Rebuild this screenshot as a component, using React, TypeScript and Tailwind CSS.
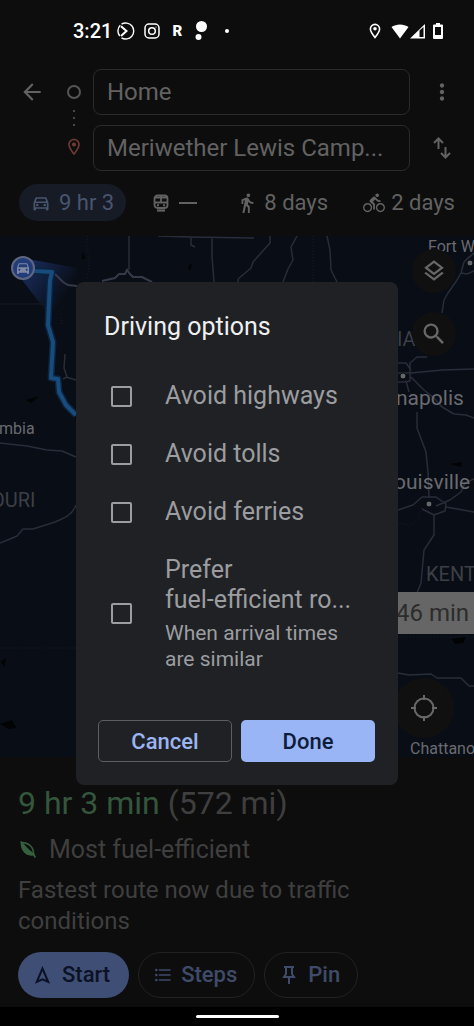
import React from 'react';
import {
    MdArrowBack,
    MdDirectionsCar,
    MdDirectionsWalk,
    MdFormatListBulleted,
    MdMoreVert,
    MdOutlineDirectionsBike,
    MdOutlineDirectionsCar,
    MdOutlineLayers,
    MdOutlineLocationOn,
    MdSearch,
} from 'react-icons/md';

const options = ['Avoid highways', 'Avoid tolls', 'Avoid ferries'];

const checkboxClass =
    'm-0 h-[21px] w-[21px] shrink-0 appearance-none rounded-[2px] border-2 border-[#9b9da0] bg-transparent checked:bg-[#99b5f5]';

const inputClass =
    'h-[46px] w-full rounded-lg border border-[#2a2a2b] bg-transparent px-[13px] text-2xl outline-none';

const StatusBar: React.FC = () => (
    <div className="flex h-[62px] items-center justify-between pl-[73px] pr-[31px] text-white">
        <div className="flex items-center">
            <span className="text-xl font-medium leading-6">3:21</span>
            <svg className="ml-[5px] h-[18px] w-[18px]" viewBox="0 0 18 18" fill="none" stroke="currentColor" strokeWidth="1.4">
                <path d="M4.5 2.2A8 8 0 1 1 4.5 15.8M3.3 3.2A8 8 0 0 0 2.8 14" />
                <path d="M4 4.2 9.5 9 4 14" strokeWidth="2" />
            </svg>
            <svg className="ml-[9px] h-4 w-4" viewBox="0 0 16 16" fill="none" stroke="currentColor" strokeWidth="1.5">
                <rect x="1" y="1" width="14" height="14" rx="4" />
                <circle cx="8" cy="8" r="3.3" />
                <circle cx="12" cy="4" r=".6" fill="currentColor" stroke="none" />
            </svg>
            <span className="ml-3 text-[15px] font-black leading-6">R</span>
            <svg className="ml-[13px] h-5 w-3" viewBox="0 0 12 20" fill="currentColor">
                <circle cx="6.5" cy="5.5" r="5.5" />
                <circle cx="3.5" cy="16" r="3" />
            </svg>
            <span className="ml-[18px] h-1 w-1 rounded-full bg-white" />
        </div>
        <div className="flex items-center">
            <svg className="h-4 w-3" viewBox="0 0 12 16" fill="none" stroke="currentColor" strokeWidth="1.6">
                <path d="M6 14.5C3.5 11.4 1.4 8.7 1.4 6A4.6 4.6 0 0 1 10.6 6C10.6 8.7 8.5 11.4 6 14.5Z" />
                <circle cx="6" cy="5.7" r="1.8" fill="currentColor" stroke="none" />
            </svg>
            <svg className="ml-[10px] h-4 w-[18px]" viewBox="0 0 18 16" fill="currentColor">
                <path d="M9 15.5 .5 4C5 .5 13 .5 17.5 4Z" />
            </svg>
            <svg className="ml-px h-4 w-[15px]" viewBox="0 0 15 16" fill="currentColor">
                <path fillRule="evenodd" d="M15 1V15.5H0ZM9.5 7.5V14H13.5V4Z" />
            </svg>
            <svg className="ml-2 h-4 w-[10px]" viewBox="0 0 10 16" fill="currentColor">
                <path fillRule="evenodd" d="M3 0H7V1.5H9A1 1 0 0 1 10 2.5V15A1 1 0 0 1 9 16H1A1 1 0 0 1 0 15V2.5A1 1 0 0 1 1 1.5H3ZM2 4V12H8V4Z" />
            </svg>
        </div>
    </div>
);

const TrainIcon: React.FC = () => (
    <svg className="h-[18px] w-4" viewBox="0 0 16 18" fill="none" stroke="currentColor" strokeWidth="1.8">
        <rect x="1.5" y="1.5" width="13" height="12.5" rx="3" />
        <path d="M1.5 8.5H14.5M8 2V8.5M2 3.5H14" />
        <path d="M4 16.5H12" strokeWidth="2.2" />
        <path d="M4 11.3H6M10 11.3H12" strokeWidth="2" />
    </svg>
);

const Directions: React.FC = () => (
    <header className="pt-[7px] text-[#626262]">
        <div className="flex px-5">
            <button aria-label="Back" className="flex h-[46px] w-6 items-center justify-center">
                <MdArrowBack className="h-[26px] w-[26px] shrink-0" />
            </button>
            <div className="ml-5 mr-[9px] flex w-5 flex-col items-center justify-between pb-[14px] pt-4">
                <span className="h-[14px] w-[14px] rounded-full border-2 border-[#555]" />
                <svg className="h-[18px] w-1" viewBox="0 0 4 18" fill="#5c5c5c">
                    <circle cx="2" cy="2" r="1" />
                    <circle cx="2" cy="9" r="1" />
                    <circle cx="2" cy="16" r="1" />
                </svg>
                <MdOutlineLocationOn className="h-5 w-5 text-[#6d3a35]" />
            </div>
            <div className="flex min-w-0 flex-1 flex-col gap-[10px]">
                <input aria-label="Starting point" defaultValue="Home" className={inputClass} />
                <input aria-label="Destination" defaultValue="Meriwether Lewis Camp..." className={inputClass} />
            </div>
            <div className="ml-5 flex w-6 flex-col gap-[10px]">
                <button aria-label="More options" className="flex h-[46px] items-center justify-center">
                    <MdMoreVert className="h-[26px] w-[26px] shrink-0" />
                </button>
                <button aria-label="Swap start and destination" className="flex h-[46px] items-center justify-center">
                    <svg className="h-[22px] w-5" viewBox="0 0 20 22" fill="none" stroke="currentColor" strokeWidth="2">
                        <path d="M6.5 12V1.5M2 6 6.5 1.5 11 6M13.5 10V20.5M9 16 13.5 20.5 18 16" />
                    </svg>
                </button>
            </div>
        </div>
        <nav className="flex items-center justify-between px-[19px] pb-[15px] pt-[13px] text-[22px] leading-[37px]">
            <button className="flex items-center gap-2 rounded-full bg-[#171b25] px-3 text-[#48556f]">
                <MdOutlineDirectionsCar className="h-5 w-5" />
                <span>9 hr 3</span>
            </button>
            <button className="flex items-center gap-[10px] pr-3">
                <TrainIcon />
                <span aria-label="Not available" className="h-[2px] w-[18px] bg-[#626262]" />
            </button>
            <button className="flex items-center gap-[6px] pr-2">
                <MdDirectionsWalk className="h-[22px] w-[22px]" />
                <span>8 days</span>
            </button>
            <button className="flex items-center gap-[6px]">
                <MdOutlineDirectionsBike className="h-[22px] w-[22px]" />
                <span>2 days</span>
            </button>
        </nav>
    </header>
);

const MapView: React.FC = () => (
    <main className="relative min-h-[400px] flex-1 overflow-hidden bg-[#090d15] text-[#696b70]">
        <svg className="absolute inset-0 h-full w-full" viewBox="0 0 474 521" preserveAspectRatio="xMidYMid slice" fill="none">
            <defs>
                <linearGradient id="beam" x1="23" y1="32" x2="66" y2="60" gradientUnits="userSpaceOnUse">
                    <stop offset="0" stopColor="#182c5c" />
                    <stop offset="1" stopColor="#090d15" />
                </linearGradient>
            </defs>
            <path d="M28 23 77 32V88L46 75 19 40Z" fill="url(#beam)" />
            {/* State lines */}
            <g stroke="#191d26">
                <path d="M0 68H43" />
                <path d="M88 0 86 10 90 25 87 44M313 0V46M0 412H77M398 401H474M62 88 60 76 64 68M398 287 410 289 418 284 422 270" strokeDasharray="1 2" />
            </g>
            {/* Lakes */}
            <g fill="#020305">
                <path d="M26 164 39 160 31 167ZM188 31 192 27 190 35ZM1 426 6 422 4 431ZM0 488 12 484 16 492 9 493ZM82 15 86 23 82 23ZM452 403 466 401 463 407 455 408ZM450 228 462 226 461 231Z" />
            </g>
            {/* Highways */}
            <g stroke="#292d39" strokeWidth="1.5" strokeLinejoin="round">
                <path d="M129 0V34M158 0 190 1 254 2M191 1V9L195 11M212 2V20L214 46M238 43V46" />
                <path d="M65 118 64 132 67 141 63 143M66 141 76 144M0 207 27 210 47 214 62 215 76 221" />
                <path d="M76 269C72 280 62 283 55 286L33 293H23L17 300 10 303 0 307" />
                <path d="M270 0V7L261 17 253 26 251 32 238 43M297 0 291 11 293 24 288 33 283 46M327 0 330 14 331 34 337 46" />
                <path d="M474 17 464 26 461 37 457 44 448 57 444 64 442 77M461 37 467 38 474 35M464 26 470 20" />
                <path d="M427 121H417L410 127V145L403 146H398M398 127H406L411 134M398 137H411L442 134 474 133M411 141 424 154 434 162 442 171 454 178 466 179 474 182M406 145 409 156M417 176V192L426 216 428 236 429 261" />
                <path d="M398 274 413 269 422 261H436L446 268 445 275 434 279 422 273M436 270 450 264 461 256 465 247 474 243M446 271 474 276M434 279V299L424 314 421 347 417 357" />
                <path d="M398 437 409 439 431 438 437 442H461L469 450H474M416 477 428 494" />
            </g>
            <path d="M55 38 59 42 63 46 68 49 77 50M102 45 115 42 119 38 125 38 127 34 130 38 133 41 142 41 152 46" stroke="#353a49" strokeWidth="2" />
            {/* Selected route */}
            <g strokeLinejoin="round">
                <path d="M23 32 35 35 52 36 50 44 48 89 53 106 51 142 58 143 59 156 66 169 76 179" stroke="#0c2440" strokeWidth="7" />
                <path d="M23 32 35 35 52 36 50 44 48 89 53 106 51 142 58 143 59 156 66 169 76 179" stroke="#184c7c" strokeWidth="4" />
            </g>
            <g fill="#65676a" stroke="#090d15">
                <circle cx="470" cy="27" r="3" />
                <circle cx="403" cy="140" r="3" />
                <circle cx="429" cy="268" r="3" />
            </g>
        </svg>
        <span className="absolute left-[11px] top-5 flex h-6 w-6 items-center justify-center rounded-full border-2 border-[#5f6780] bg-[#223b79] text-[#7f89a3]">
            <MdDirectionsCar className="h-4 w-4" />
        </span>
        <span className="absolute -left-px top-[181px] text-base">mbia</span>
        <span className="absolute -left-[9px] top-[250px] text-xl text-[#3c3f46]">OURI</span>
        <span className="absolute left-[428px] top-[-1px] whitespace-nowrap text-base">Fort W</span>
        <span className="absolute left-[397px] top-[89px] text-xl text-[#3c3f46]">IA</span>
        <span className="absolute left-[396px] top-[147px] text-[21px]">napolis</span>
        <span className="absolute left-[394px] top-[231px] text-[21px]">ouisville</span>
        <span className="absolute left-[426px] top-[324px] text-xl text-[#3c3f46]">KENT</span>
        <span className="absolute left-[396px] right-0 top-[356px] h-[42px] whitespace-nowrap bg-[#666666] text-2xl leading-[42px] text-[#2c2c2c]">
            46 min
        </span>
        <span className="absolute left-[410px] top-[501px] whitespace-nowrap text-base">Chattano</span>
        <button aria-label="Layers" className="absolute right-[18px] top-[13px] flex h-11 w-11 items-center justify-center rounded-full bg-[#101010] text-[#686868]">
            <MdOutlineLayers className="h-[26px] w-[26px]" />
        </button>
        <button aria-label="Search along route" className="absolute right-[18px] top-[76px] flex h-11 w-11 items-center justify-center rounded-full bg-[#101010] text-[#686868]">
            <MdSearch className="h-7 w-7" />
        </button>
        <button aria-label="My location" className="absolute bottom-[19px] right-5 flex h-[60px] w-[60px] items-center justify-center rounded-full bg-[#101010] text-[#686868]">
            <svg className="h-[26px] w-[26px]" viewBox="0 0 26 26" fill="none" stroke="currentColor" strokeWidth="2">
                <circle cx="13" cy="13" r="9.5" />
                <path d="M13 0V5M13 21V26M0 13H5M21 13H26" />
            </svg>
        </button>
    </main>
);

const RouteSheet: React.FC = () => (
    <section className="bg-[#0d0d0d] px-[18px] pb-[9px] pt-7 text-[#3f3f3f]">
        <h1 className="text-[32px] leading-9">
            <span className="text-[#34563c]">9 hr 3 min</span> (572 mi)
        </h1>
        <div className="mt-[13px] flex items-center text-[25px] leading-[31px]">
            <svg className="ml-[2px] mr-3 h-[18px] w-[17px]" viewBox="0 0 17 18" fill="none" stroke="#35603f" strokeWidth="1.6">
                <path d="M1.5 1.5C8 1.5 14 5.5 13.5 13.5C6 14.5 1.5 9 1.5 1.5Z" />
                <path d="M1.5 1.5C1.5 9 6 14.5 13.5 13.5C9 10 5 6 1.5 1.5Z" fill="#35603f" />
                <path d="M13 13 15.5 16.5" />
            </svg>
            <span>Most fuel-efficient</span>
        </div>
        <p className="mt-[10px] max-w-[360px] text-2xl leading-[31px]">Fastest route now due to traffic conditions</p>
        <div className="mt-[15px] flex gap-[9px] text-[22px] font-medium leading-[46px]">
            <button className="flex h-[46px] items-center rounded-full bg-[#3f4e74] pl-[17px] pr-[19px] text-[#0b1226]">
                <svg className="mr-3 h-[18px] w-[15px]" viewBox="0 0 15 18" fill="none" stroke="currentColor" strokeWidth="2">
                    <path d="M7.5 2.5 1.7 16 7.5 13.4 13.3 16Z" />
                </svg>
                Start
            </button>
            <button className="flex h-[46px] items-center rounded-full border border-[#222223] pl-[14px] pr-[17px] text-[#3f4b68]">
                <MdFormatListBulleted className="mr-2 h-5 w-5" />
                Steps
            </button>
            <button className="flex h-[46px] items-center rounded-full border border-[#222223] px-[17px] text-[#3f4b68]">
                <svg className="mr-3 h-[18px] w-[14px]" viewBox="0 0 14 18" fill="none" stroke="currentColor" strokeWidth="2">
                    <path d="M2 1H12M4 1V8L2 11H12L10 8V1M7 11V18" />
                </svg>
                Pin
            </button>
        </div>
    </section>
);

const DrivingOptionsDialog: React.FC = () => (
    <div className="fixed inset-0 flex items-center justify-center pt-[41px]">
        <div role="dialog" aria-labelledby="options-title" className="w-full max-w-[322px] rounded-[8px] bg-[#202124] pb-[23px] pl-[22px] pr-[23px] pt-[30px]">
            <h2 id="options-title" className="mb-[25px] pl-[6px] text-[25px] leading-[30px] text-[#eef0f2]">
                Driving options
            </h2>
            {options.map((option) => (
                <label key={option} className="flex h-[58px] items-center gap-[33px] pl-[13px] text-[25px] text-[#9b9da0]">
                    <input type="checkbox" className={checkboxClass} />
                    {option}
                </label>
            ))}
            <label className="mt-[14px] flex items-center gap-[33px] pl-[13px] text-[#9b9da0]">
                <input type="checkbox" className={checkboxClass} />
                <span>
                    <span className="block text-[25px] leading-[30px]">
                        Prefer
                        <br />
                        fuel-efficient ro...
                    </span>
                    <span className="mt-[5px] block text-[21px] leading-[26px]">
                        When arrival times
                        <br />
                        are similar
                    </span>
                </span>
            </label>
            <div className="mt-12 grid grid-cols-2 gap-[9px] text-[22px] font-medium">
                <button className="h-[42px] rounded-[5px] border border-[#5c5e62] text-[#9bb5f2]">Cancel</button>
                <button className="h-[42px] rounded-[5px] bg-[#99b5f5] text-[#0e1c3c]">Done</button>
            </div>
        </div>
    </div>
);

export default function App() {
    return (
        <div className="flex min-h-screen flex-col bg-[#0d0d0d] font-[Roboto,sans-serif]">
            <StatusBar />
            <Directions />
            <MapView />
            <RouteSheet />
            <div className="flex h-[19px] items-center justify-center bg-black">
                <span className="h-[3px] w-[83px] rounded-full bg-white" />
            </div>
            <DrivingOptionsDialog />
        </div>
    );
}
